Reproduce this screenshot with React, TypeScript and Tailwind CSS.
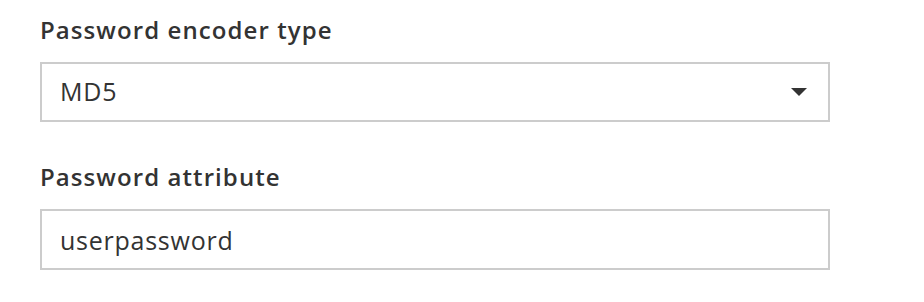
export default function App() {
  return (
    <div className="min-h-screen bg-white px-10 pt-[14px] font-['Open_Sans',sans-serif] text-[#333]">
      <div className="w-[790px]">
        <label className="block text-[24px] font-semibold leading-[32px] tracking-[0.045em]">Password encoder type</label>
        <div className="mt-[16px] flex h-[60px] items-center justify-between border-2 border-[#ccc] pl-[18px] pr-[21px]">
          <span className="text-[25px] tracking-[0.03em]">MD5</span>
          <svg width="16" height="8" viewBox="0 0 16 8" className="text-[#333]">
            <path d="M0 0h16L8 8z" fill="currentColor" />
          </svg>
        </div>
        <label className="mt-[39px] block text-[24px] font-semibold leading-[32px] tracking-[0.045em]">Password attribute</label>
        <input
          readOnly
          value="userpassword"
          className="mt-[16px] block h-[61px] w-full border-2 border-[#ccc] pl-[18px] text-[25px] tracking-[0.03em] text-[#333] outline-none"
        />
      </div>
    </div>
  )
}
